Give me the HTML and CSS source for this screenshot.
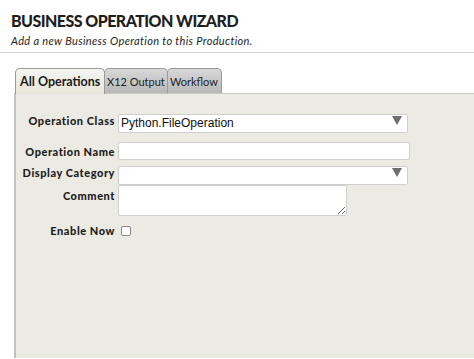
FILE: index.html
```html
<!DOCTYPE html>
<html>
<head>
<meta charset="utf-8">
<link rel="stylesheet" href="styles.css">
</head>
<body>
<div class="header">
  <h1 class="title">BUSINESS OPERATION WIZARD</h1>
  <p class="subtitle">Add a new Business Operation to this Production.</p>
</div>
<div class="tabs">
  <div class="tab active">All Operations</div>
  <div class="tab">X12 Output</div>
  <div class="tab">Workflow</div>
</div>
<div class="panel">
  <div class="form">
    <label class="lbl">Operation Class</label>
    <div class="selwrap w290">
      <select class="sel"><option>Python.FileOperation</option></select>
      <svg class="arrow" width="10" height="9" viewBox="0 0 10 9"><polygon points="0,0 10,0 5,9" fill="#6e6e6e"/></svg>
    </div>
    <label class="lbl gap-top">Operation Name</label>
    <div class="gap-top"><input class="txt" type="text"></div>
    <label class="lbl">Display Category</label>
    <div class="selwrap w290">
      <select class="sel"><option></option></select>
      <svg class="arrow" width="10" height="9" viewBox="0 0 10 9"><polygon points="0,0 10,0 5,9" fill="#6e6e6e"/></svg>
    </div>
    <label class="lbl top">Comment</label>
    <textarea class="area"></textarea>
    <label class="lbl gap-top2">Enable Now</label>
    <div class="gap-top2"><input class="chk" type="checkbox"></div>
  </div>
</div>
</body>
</html>
```
FILE: styles.css
```css
html, body {
  margin: 0;
  padding: 0;
  background: #ffffff;
}
body {
  width: 474px;
  height: 359px;
  overflow: hidden;
  font-family: "Lato", "DejaVu Sans", sans-serif;
  color: #1e1e1e;
}
.header {
  padding: 12px 0 0 11px;
  height: 40px;
  border-bottom: 1px solid #d2d2d2;
}
.title {
  margin: 0;
  font-size: 16px;
  line-height: 18px;
  font-weight: 900;
  letter-spacing: -0.55px;
}
.subtitle {
  margin: 4px 0 0 0;
  font-size: 11px;
  line-height: 14px;
  font-style: italic;
  letter-spacing: 0.35px;
}
.tabs {
  display: flex;
  margin-top: 15px;
  padding-left: 15px;
  height: 25px;
}
.tab {
  box-sizing: border-box;
  height: 25px;
  padding: 0 2px;
  border: 1px solid #9a9a9a;
  border-bottom: none;
  border-radius: 5px 5px 0 0;
  background: linear-gradient(#d8d8d8, #b8b8b8);
  font-size: 11px;
  line-height: 25px;
  color: #222;
  margin-right: -1px;
  white-space: nowrap;
  overflow: hidden;
}
.tab:nth-child(2) { width: 64px; }
.tab:nth-child(3) { width: 55px; }
.tab.active {
  width: 90px;
  background: linear-gradient(#f5f5f3, #e6e6d8);
  font-weight: 700;
  font-size: 12.5px;
  padding-left: 4px;
  color: #1a1a1a;
  position: relative;
  z-index: 1;
  height: 26px;
}
.panel {
  margin-left: 14px;
  height: 265px;
  border-left: 2px solid #c2c2c2;
  border-top: 1px solid #c9c9c0;
  background: #ebeae3;
  box-sizing: border-box;
  padding-top: 17px;
}
.form {
  display: grid;
  grid-template-columns: 99px auto;
  column-gap: 3px;
  row-gap: 3px;
  align-items: center;
  justify-items: start;
}
.lbl {
  justify-self: end;
  font-size: 11px;
  font-weight: 900;
  letter-spacing: 0.55px;
  color: #1e1e1e;
  white-space: nowrap;
}
.lbl.top {
  align-self: start;
  padding-top: 4px;
}
.gap-top { margin-top: 9px; }
.gap-top2 { margin-top: 5px; }
.selwrap {
  position: relative;
  height: 19px;
}
.w290 { width: 290px; }
.sel {
  -webkit-appearance: none;
  appearance: none;
  box-sizing: border-box;
  width: 100%;
  height: 19px;
  margin: 0;
  padding: 0 0 0 2px;
  border: 1px solid #cfcfcf;
  border-radius: 2px;
  background: #ffffff;
  font-family: "Liberation Sans", Arial, sans-serif;
  font-size: 12px;
  color: #111;
  outline: none;
}
.arrow {
  position: absolute;
  right: 6px;
  top: 5px;
}
.txt {
  box-sizing: border-box;
  display: block;
  width: 292px;
  height: 18px;
  margin: 0;
  border: 1px solid #cfcfcf;
  border-radius: 2px;
  background: #fff;
  padding: 0 2px;
  font-family: "Liberation Sans", Arial, sans-serif;
  font-size: 12px;
}
.area {
  box-sizing: border-box;
  width: 229px;
  height: 31px;
  margin: 0;
  border: 1px solid #cfcfcf;
  border-radius: 2px;
  background: #fff;
  font-family: "Liberation Sans", Arial, sans-serif;
  font-size: 12px;
  display: block;
}
.chk {
  -webkit-appearance: none;
  appearance: none;
  display: block;
  width: 10px;
  height: 10px;
  margin: 0 0 0 3px;
  border: 1px solid #8a8a8a;
  border-radius: 2px;
  background: #fff;
}
```
